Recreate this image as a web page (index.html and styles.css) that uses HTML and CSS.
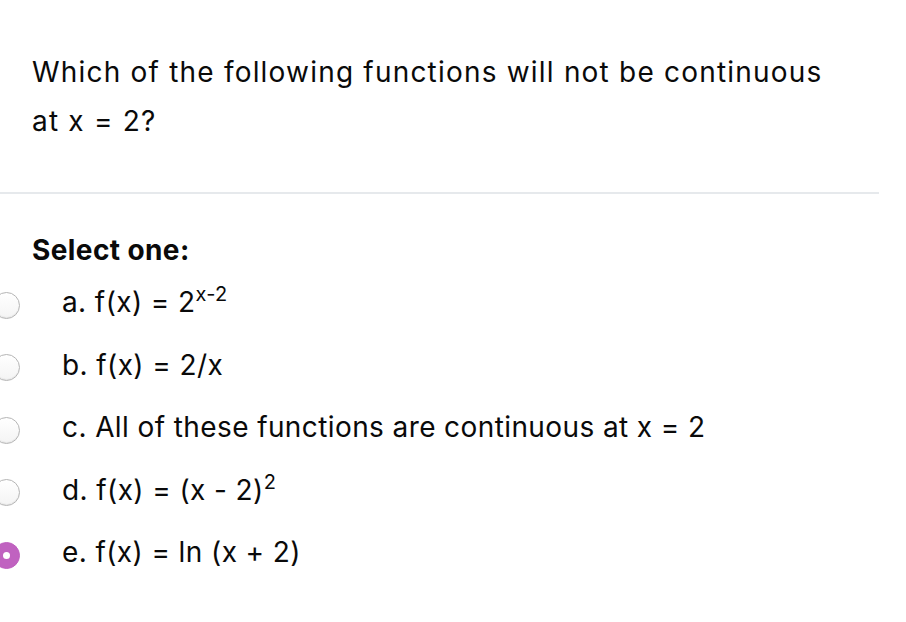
FILE: index.html
```html
<!DOCTYPE html>
<html>
<head>
<meta charset="utf-8">
<link rel="stylesheet" href="styles.css">
</head>
<body>
<div class="page">
  <div class="question">Which of the following functions will not be continuous at x = 2?</div>
  <div class="divider"></div>
  <div class="answers">
    <div class="prompt">Select one:</div>
    <div class="options">
      <label class="option"><span class="radio"></span><span class="text">a. f(x) = 2<sup>x-2</sup></span></label>
      <label class="option"><span class="radio"></span><span class="text">b. f(x) = 2/x</span></label>
      <label class="option"><span class="radio"></span><span class="text">c. All of these functions are continuous at x = 2</span></label>
      <label class="option"><span class="radio"></span><span class="text">d. f(x) = (x - 2)<sup>2</sup></span></label>
      <label class="option"><span class="radio checked"></span><span class="text">e. f(x) = ln (x + 2)</span></label>
    </div>
  </div>
</div>
</body>
</html>
```
FILE: styles.css
```css
html, body {
  margin: 0;
  padding: 0;
  background: #ffffff;
}
body {
  font-family: Inter, "Liberation Sans", Arial, sans-serif;
  color: #0a0a0a;
  overflow: hidden;
}
.page {
  width: 906px;
  height: 622px;
  overflow: hidden;
}
.question {
  font-size: 28px;
  letter-spacing: 1.2px;
  line-height: 49px;
  padding: 48px 0 0 32px;
  box-sizing: border-box;
  width: 850px;
}
.divider {
  margin-top: 46px;
  width: 879px;
  height: 2px;
  background: #e6e9ec;
}
.answers {
  padding-top: 36px;
}
.prompt {
  font-size: 28px;
  letter-spacing: 0.4px;
  font-weight: 700;
  line-height: 40px;
  padding-left: 32px;
}
.options {
  display: flex;
  flex-direction: column;
  margin-top: 1px;
}
.option {
  display: flex;
  align-items: center;
  height: 62.5px;
  font-size: 28px;
  letter-spacing: 0.4px;
}
.radio {
  flex: none;
  width: 25px;
  height: 25px;
  margin-left: -7px;
  margin-right: 42px;
  margin-top: 6px;
  border-radius: 50%;
  border: 1px solid #b5b5b5;
  background: linear-gradient(#ffffff, #f4f4f4);
  box-shadow: inset 0 -1px 1px rgba(0,0,0,0.06);
}
.radio.checked {
  border-color: #bf5fbf;
  background: #c062c0;
  box-shadow: none;
  position: relative;
}
.radio.checked::after {
  content: "";
  position: absolute;
  left: 9px;
  top: 9px;
  width: 7px;
  height: 7px;
  border-radius: 50%;
  background: #ffffff;
}
.text sup {
  font-size: 20px;
  vertical-align: 0;
  position: relative;
  top: -11px;
  line-height: 0;
  letter-spacing: 0.3px;
}
```
